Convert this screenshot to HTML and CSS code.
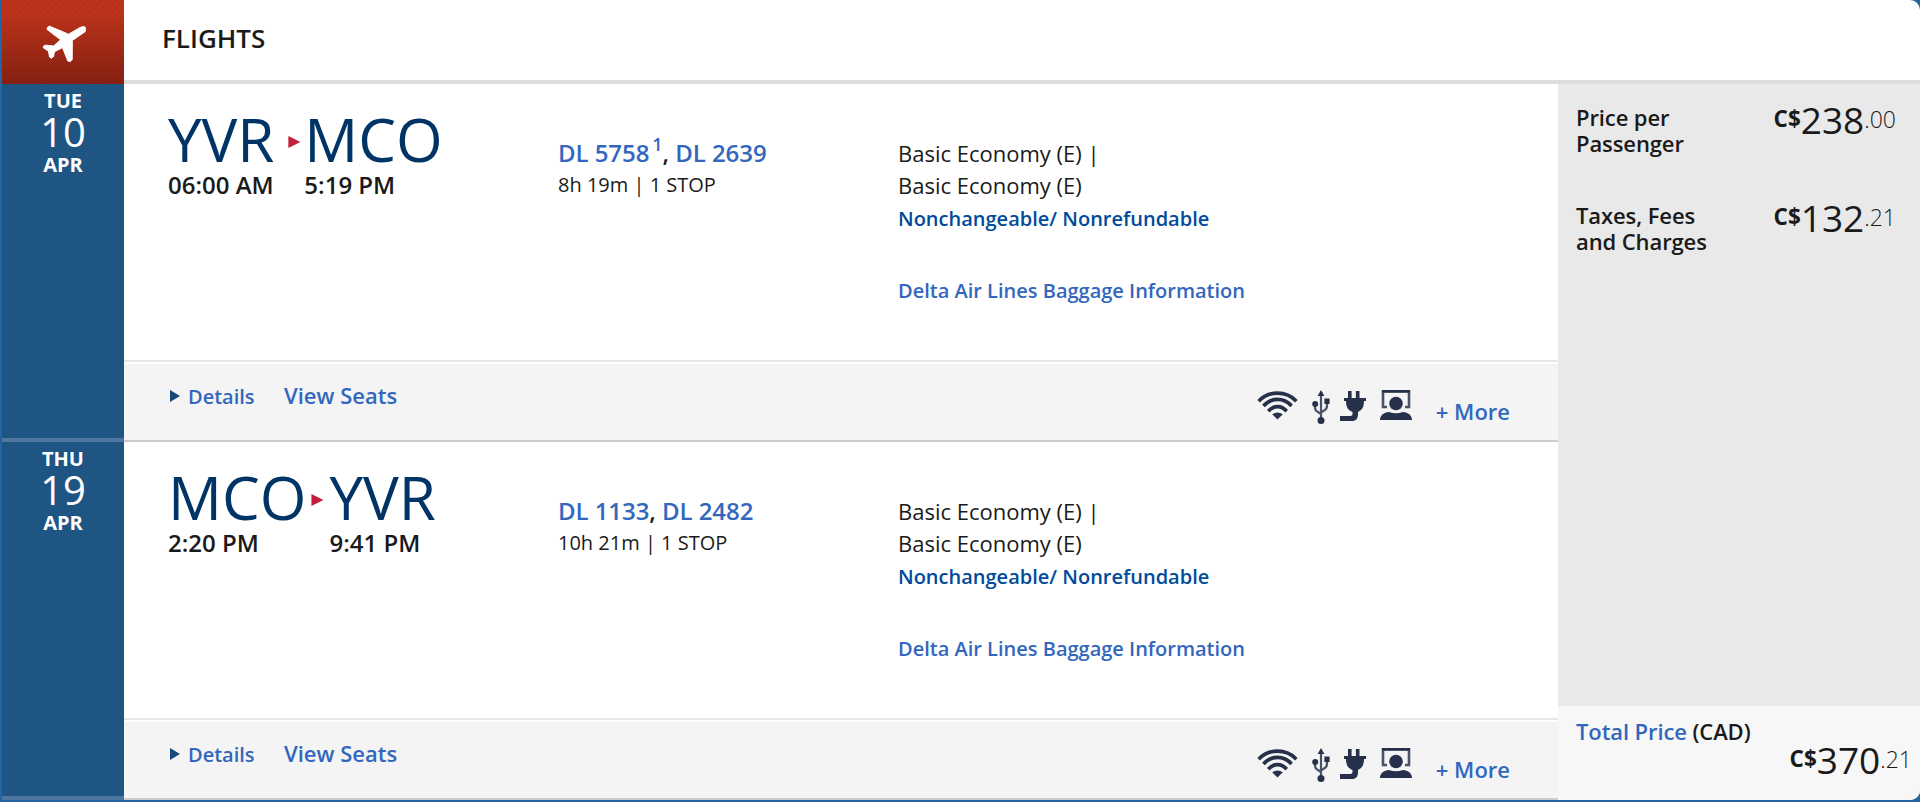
FILE: index.html
```html
<!DOCTYPE html>
<html lang="en">
<head>
<meta charset="utf-8">
<title>Flights</title>
<link rel="stylesheet" href="styles.css">
</head>
<body>
<svg class="sprite" width="0" height="0">
  <symbol id="wifi" viewBox="0 0 42 30">
    <g fill="none" stroke="#27304a" stroke-width="3.8">
      <path d="M1.5 10.5C12-.5 30-.5 40.500 10.500"/>
      <path d="M6.500 15.500C14.500 6.500 27.500 6.500 35.500 15.500"/>
      <path d="M11.500 21C17 14.500 25 14.500 30.500 21"/>
    </g>
    <path d="M15.500 24Q21 20.500 26.500 24L21 29.500Z" fill="#27304a"/>
  </symbol>
  <symbol id="usb" viewBox="0 0 18 34">
    <g fill="none" stroke="#4a5268" stroke-width="2.200">
      <path d="M9 4V30M3 14v3.500q0 3 3 4.500l3 2M15 12v4q0 3-3 4.500l-3 2"/>
    </g>
    <path d="M9 0l3.400 6H5.600z" fill="#27304a"/>
    <circle cx="3.200" cy="14" r="3" fill="#27304a"/>
    <path d="M12.400 8.500h5.200v5.500h-5.200z" fill="#27304a"/>
    <circle cx="9" cy="30.500" r="3.500" fill="#27304a"/>
  </symbol>
  <symbol id="plug" viewBox="0 0 26 32">
    <path d="M8 1h3.600v7h4.300V1h3.600v7H26v3h-2c0 6.500-2.500 9.500-6 11v2c0 4.500-2 7-6 7H0v-5h10c2 0 2.500-.8 2.500-2.500V22C8.500 20.500 6 17.500 6 11H4V8h4z" fill="#27304a"/>
  </symbol>
  <symbol id="screen" viewBox="0 0 34 30">
    <path d="M8 17H4V1.500h26V17h-4" fill="none" stroke="#4a5268" stroke-width="2.600"/>
    <path d="M3 0h28v2.500H3z" fill="#27304a"/>
    <circle cx="17" cy="13.500" r="6.800" fill="#27304a"/>
    <path d="M1 30c0-5 4-7.500 9-8q7 2.600 14 0c5 .5 9 3 9 8z" fill="#27304a"/>
  </symbol>
</svg>
<main class="card">
  <header class="head">
    <div class="badge">
      <svg class="plane" viewBox="0 0 44 38"><path d="M7.500 1.200Q4.500 1.800 5.200 4.600L18.600 14.800L11.500 21L3.800 20.200Q.6 20.500 1.300 22.800L6.500 26.200L7.500 32Q9.500 34.600 11.600 31.400L12.400 26.800L20.500 22.600L25.800 36Q28.200 38 30.200 34.500L30.300 15.500L43 6.800Q45 3.200 42.500 1.800Q41 1.200 38 2.600L26.500 9.200Z" fill="#fff" stroke="#fff" stroke-linejoin="round"/></svg>
    </div>
    <h1 class="title">FLIGHTS</h1>
  </header>
  <div class="body">
    <div class="legs">
      <section class="leg">
        <div class="date"><span class="dow">TUE</span><span class="day">10</span><span class="mon">APR</span></div>
        <div class="main">
          <div class="info">
            <div class="route">
              <div class="stop"><span class="code out">YVR</span><span class="time">06:00 AM</span></div>
              <i class="arrow wide"></i>
              <div class="stop"><span class="code in">MCO</span><span class="time">5:19 PM</span></div>
            </div>
            <div class="flight">
              <p class="numbers"><a>DL 5758<sup>1</sup></a>, <a>DL 2639</a></p>
              <p class="duration">8h 19m | 1 STOP</p>
            </div>
            <div class="fare">
              <p class="cabin">Basic Economy (E) |</p>
              <p class="cabin">Basic Economy (E)</p>
              <p class="rule">Nonchangeable/ Nonrefundable</p>
              <a class="bags">Delta Air Lines Baggage Information</a>
            </div>
          </div>
          <div class="foot">
            <i class="caret"></i><a class="details">Details</a><a class="seats">View Seats</a>
            <div class="amenities">
              <svg class="wifi"><use href="#wifi"/></svg><svg class="usb"><use href="#usb"/></svg><svg class="plug"><use href="#plug"/></svg><svg class="screen"><use href="#screen"/></svg>
              <a class="more">+ More</a>
            </div>
          </div>
        </div>
      </section>
      <section class="leg">
        <div class="date"><span class="dow">THU</span><span class="day">19</span><span class="mon">APR</span></div>
        <div class="main">
          <div class="info">
            <div class="route">
              <div class="stop"><span class="code out">MCO</span><span class="time">2:20 PM</span></div>
              <i class="arrow"></i>
              <div class="stop"><span class="code in">YVR</span><span class="time">9:41 PM</span></div>
            </div>
            <div class="flight">
              <p class="numbers"><a>DL 1133</a>, <a>DL 2482</a></p>
              <p class="duration">10h 21m | 1 STOP</p>
            </div>
            <div class="fare">
              <p class="cabin">Basic Economy (E) |</p>
              <p class="cabin">Basic Economy (E)</p>
              <p class="rule">Nonchangeable/ Nonrefundable</p>
              <a class="bags">Delta Air Lines Baggage Information</a>
            </div>
          </div>
          <div class="foot">
            <i class="caret"></i><a class="details">Details</a><a class="seats">View Seats</a>
            <div class="amenities">
              <svg class="wifi"><use href="#wifi"/></svg><svg class="usb"><use href="#usb"/></svg><svg class="plug"><use href="#plug"/></svg><svg class="screen"><use href="#screen"/></svg>
              <a class="more">+ More</a>
            </div>
          </div>
        </div>
      </section>
    </div>
    <aside class="prices">
      <div class="line">
        <p class="label">Price per<br>Passenger</p>
        <p class="amount"><b>C$</b><span class="whole">238</span><span class="cents">.00</span></p>
      </div>
      <div class="line">
        <p class="label">Taxes, Fees<br>and Charges</p>
        <p class="amount"><b>C$</b><span class="whole">132</span><span class="cents">.21</span></p>
      </div>
      <div class="total">
        <p class="label"><a>Total Price</a> (CAD)</p>
        <p class="amount"><b>C$</b><span class="whole">370</span><span class="cents">.21</span></p>
      </div>
    </aside>
  </div>
</main>
</body>
</html>
```
FILE: styles.css
```css
* { box-sizing: border-box; }
body {
  margin: 0;
  height: 802px;
  padding: 0 0 2px 2px;
  overflow: hidden;
  background: #2265a0;
  color: #1a1a1a;
  font-family: "Open Sans", "Noto Sans", sans-serif;
  white-space: nowrap;
}
h1, p { margin: 0; }
a { color: #3267bd; }
.sprite { display: block; }
.card { height: 800px; background: #fff; border-radius: 0 10px 10px 0; overflow: hidden; }

.head { display: flex; height: 84px; }
.badge {
  width: 122px;
  padding: 25px 0 0 40px;
  background:
    repeating-linear-gradient(135deg, rgba(90, 0, 0, .05) 0 2px, transparent 2px 5px),
    linear-gradient(#bd331b 15%, #852112);
}
.plane { display: block; width: 44px; height: 38px; }
.title {
  flex: 1;
  padding-left: 38px;
  border-bottom: 4px solid #ddd;
  font-size: 26px;
  font-weight: 600;
  line-height: 76px;
}

.body { display: flex; height: 716px; }
.legs { width: 1556px; }
.leg { display: flex; height: 358px; }
.date {
  display: flex;
  flex-direction: column;
  align-items: center;
  width: 122px;
  padding-top: 5px;
  background: #1f5582;
  border-bottom: 4px solid #4f76a0;
  color: #fff;
}
.dow, .mon { font-size: 20px; font-weight: 700; line-height: 24px; }
.day { margin-bottom: 2px; font-size: 40px; line-height: 38px; }
.main { flex: 1; display: flex; flex-direction: column; }
.info { display: flex; height: 276px; padding-left: 44px; }

.route { display: flex; width: 390px; padding-top: 20px; }
.stop { display: flex; flex-direction: column; }
.code { color: #036; font-size: 60px; line-height: 70px; }
.time { font-size: 24px; font-weight: 600; line-height: 22px; }
.arrow {
  width: 12px;
  height: 12px;
  margin: 32px 6px 0 5px;
  background: #c41e3a;
  clip-path: polygon(0 0, 100% 50%, 0 100%);
}
.arrow.wide { margin-left: 14px; margin-right: 4px; }

.flight { width: 340px; padding-top: 53px; }
.numbers { font-size: 24px; font-weight: 600; line-height: 32px; letter-spacing: -.06px; }
.numbers sup { margin-left: 3px; font-size: 18px; line-height: 0; vertical-align: 11px; }
.duration { font-size: 20px; line-height: 32px; }
.fare { padding-top: 53px; }
.cabin { font-size: 22px; line-height: 32px; }
.rule, .bags { font-size: 20px; font-weight: 600; line-height: 32px; }
.rule { color: #004b9b; margin: 2px 0 40px; }

.foot {
  display: flex;
  height: 82px;
  padding-left: 46px;
  border-top: 2px solid #e7e7e7;
  border-bottom: 2px solid #ccc;
  background: linear-gradient(#fff 2px, #f4f4f4 2px);
  font-weight: 600;
}
.caret { width: 10px; height: 12px; margin: 28px 8px 0 0; background: #174a78; clip-path: polygon(0 0, 100% 50%, 0 100%); }
.details { width: 96px; font-size: 20px; line-height: 69px; }
.seats { font-size: 22px; line-height: 67px; }
.amenities { display: flex; margin-left: auto; padding: 28px 48px 0 0; }
.amenities svg { display: block; }
.amenities .wifi { width: 41px; height: 29px; margin-top: 1px; }
.amenities .usb { width: 18px; height: 34px; margin: 0 10px 0 14px; }
.amenities .plug { width: 26px; height: 32px; }
.amenities .screen { width: 34px; height: 30px; margin-left: 13px; }
.more { margin-left: 23px; font-size: 22px; line-height: 42px; }

.prices { flex: 1; display: flex; flex-direction: column; background: #e9e9e9; }
.line { display: flex; justify-content: space-between; height: 98px; padding: 20px 24px 0 18px; }
.label { font-size: 22px; font-weight: 600; line-height: 26px; letter-spacing: -.1px; }
.amount { display: flex; font-size: 23px; line-height: 30px; }
.amount b { font-size: 22.500px; font-weight: 700; }
.whole { font-size: 37px; line-height: 32px; }
.cents { font-weight: 300; }
.total { margin-top: auto; height: 94px; padding: 12px 8px 0 18px; background: #f7f7f7; }
.total .amount { justify-content: flex-end; }
```
